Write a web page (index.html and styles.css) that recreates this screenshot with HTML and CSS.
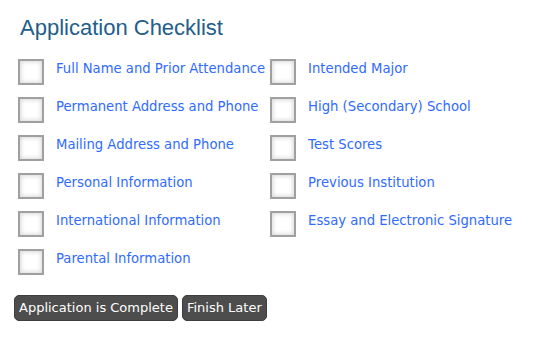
FILE: index.html
```html
<!DOCTYPE html>
<html>
<head>
<meta charset="utf-8">
<link rel="stylesheet" href="styles.css">
</head>
<body>
<div class="page">
  <h1 class="title">Application Checklist</h1>
  <div class="checklist">
    <div class="col">
      <div class="item"><span class="box"></span><a class="label">Full Name and Prior Attendance</a></div>
      <div class="item"><span class="box"></span><a class="label">Permanent Address and Phone</a></div>
      <div class="item"><span class="box"></span><a class="label">Mailing Address and Phone</a></div>
      <div class="item"><span class="box"></span><a class="label">Personal Information</a></div>
      <div class="item"><span class="box"></span><a class="label">International Information</a></div>
      <div class="item"><span class="box"></span><a class="label">Parental Information</a></div>
    </div>
    <div class="col">
      <div class="item"><span class="box"></span><a class="label">Intended Major</a></div>
      <div class="item"><span class="box"></span><a class="label">High (Secondary) School</a></div>
      <div class="item"><span class="box"></span><a class="label">Test Scores</a></div>
      <div class="item"><span class="box"></span><a class="label">Previous Institution</a></div>
      <div class="item"><span class="box"></span><a class="label">Essay and Electronic Signature</a></div>
    </div>
  </div>
  <div class="actions">
    <button class="btn">Application is Complete</button>
    <button class="btn">Finish Later</button>
  </div>
</div>
</body>
</html>
```

FILE: styles.css
```css
html, body {
  margin: 0;
  padding: 0;
  background: #ffffff;
}
.page {
  padding: 14px 0 0 14px;
  font-family: "DejaVu Sans", Verdana, sans-serif;
}
.title {
  margin: 0 0 0 6px;
  font-family: "Liberation Sans", Arial, sans-serif;
  font-weight: normal;
  font-size: 22px;
  line-height: 28px;
  color: #235d8a;
}
.checklist {
  display: flex;
  margin-top: 17px;
  margin-left: 4px;
}
.col {
  display: flex;
  flex-direction: column;
  gap: 12px;
}
.col + .col {
  margin-left: 5px;
}
.item {
  display: flex;
  align-items: flex-start;
  height: 26px;
}
.box {
  box-sizing: border-box;
  width: 26px;
  height: 26px;
  border: 2px solid #a0a0a0;
  background: #ffffff;
  box-shadow: inset 0 0 4px 1px #d8d8d8;
  flex: none;
}
.label {
  margin-left: 12px;
  margin-top: 2px;
  font-size: 13.2px;
  line-height: 16px;
  color: #2f6bff;
  white-space: nowrap;
}
.actions {
  display: flex;
  gap: 4px;
  margin-top: 20px;
}
.btn {
  font-family: "DejaVu Sans", Verdana, sans-serif;
  font-size: 13px;
  color: #ffffff;
  background: #4d4d4d;
  border: 1px solid #3e3e3e;
  border-radius: 5px;
  height: 26px;
  padding: 0 4px;
  line-height: 22px;
}
```
